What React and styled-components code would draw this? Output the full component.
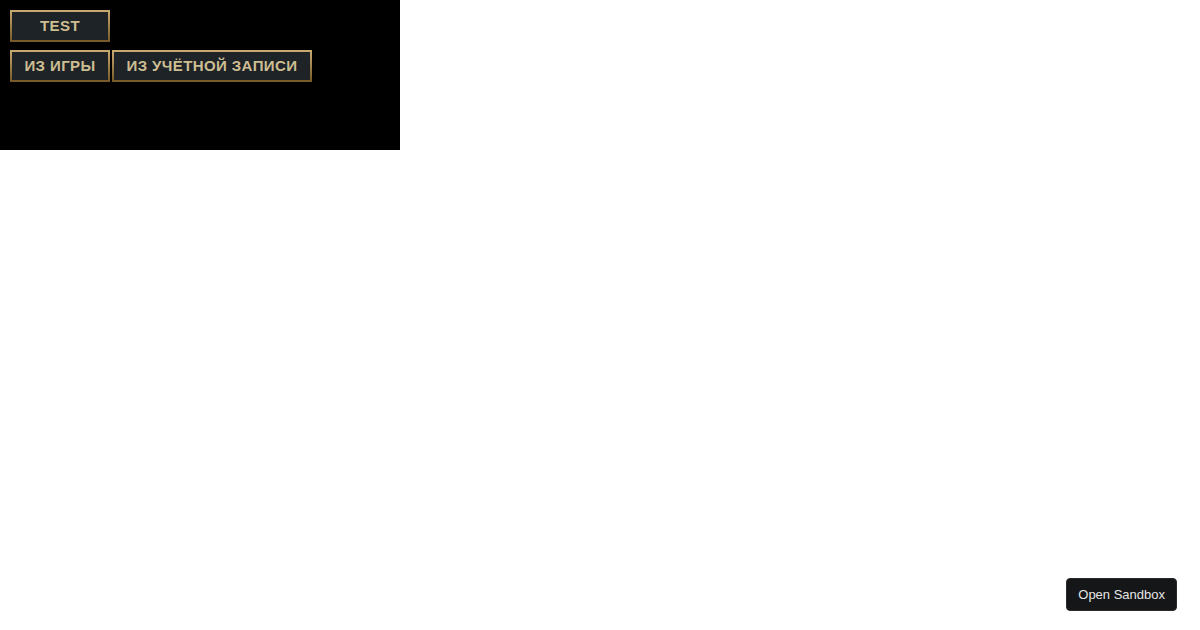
import React from 'react'
import styled, { createGlobalStyle } from 'styled-components'

const GlobalStyle = createGlobalStyle`
  html, body {
    margin: 0;
    padding: 0;
    background: #fff;
    font-family: "Liberation Sans", Arial, sans-serif;
  }
`

const Stage = styled.div`
  width: 400px;
  height: 150px;
  box-sizing: border-box;
  padding: 10px;
  background: #000;
  display: flex;
  flex-direction: column;
  gap: 8px;
`

const Row = styled.div`
  display: flex;
  gap: 2px;
`

const GoldButton = styled.button`
  width: ${p => p.$width || 100}px;
  height: 32px;
  box-sizing: border-box;
  padding: 0 0 1px;
  border: 2px solid transparent;
  border-image: linear-gradient(to bottom, #c8aa6e, #785a28) 1;
  background: #1e2328;
  color: #cdbe91;
  font-family: "Liberation Sans", Arial, sans-serif;
  font-weight: 700;
  font-size: 15px;
  letter-spacing: 0.4px;
  text-transform: uppercase;
  cursor: pointer;
`

const SandboxButton = styled.button`
  position: fixed;
  right: 23px;
  bottom: 19px;
  height: 33px;
  padding: 0 11px;
  border: 1px solid #2a2a2a;
  border-radius: 4px;
  background: #151618;
  color: #e6e6e6;
  font-family: "Liberation Sans", Arial, sans-serif;
  font-size: 13px;
`

export default function App() {
  return (
    <>
      <GlobalStyle />
      <Stage>
        <Row>
          <GoldButton>Test</GoldButton>
        </Row>
        <Row>
          <GoldButton>Из игры</GoldButton>
          <GoldButton $width={200}>Из учётной записи</GoldButton>
        </Row>
      </Stage>
      <SandboxButton>Open Sandbox</SandboxButton>
    </>
  )
}
